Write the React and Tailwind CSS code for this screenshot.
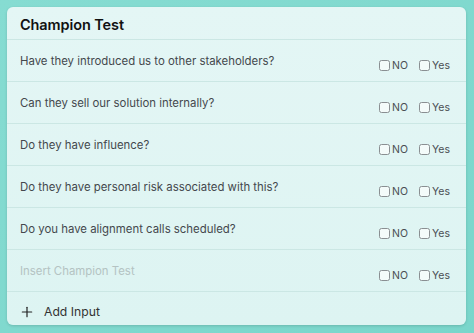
import { Plus } from 'lucide-react';

const questions = [
  'Have they introduced us to other stakeholders?',
  'Can they sell our solution internally?',
  'Do they have influence?',
  'Do they have personal risk associated with this?',
  'Do you have alignment calls scheduled?',
];

function Check({ label }) {
  return (
    <label className="flex items-center gap-[2px]">
      <span className="w-[11px] h-[11px] rounded-[2.5px] border border-[#8a8f92] bg-[#f4fbfa]" />
      <span className="text-[10.5px] text-[#4a4e53]">{label}</span>
    </label>
  );
}

function Row({ text, placeholder }) {
  return (
    <div className="h-[42px] flex items-center justify-between pl-[13px] pr-[16px] border-t border-[#cbe7e4]">
      <span className={`mt-[3px] text-[11.4px] ${placeholder ? 'text-[#b4c3c2]' : 'text-[#44484d]'}`}>
        {text}
      </span>
      <div className="flex items-center gap-[11px] mt-[10px]">
        <Check label="NO" />
        <Check label="Yes" />
      </div>
    </div>
  );
}

export default function App() {
  return (
    <div
      className="w-[474px] h-[333px] bg-gradient-to-br from-[#86dcd2] to-[#7ad6cb] p-[7px] pr-[8px] pb-[8px]"
      style={{ fontFamily: 'Inter, "Noto Sans", sans-serif' }}
    >
      <div className="h-full rounded-[6px] bg-gradient-to-b from-[#e4f6f5] to-[#ddf4f2] shadow-[0_1px_3px_rgba(0,0,0,0.15)] flex flex-col overflow-hidden">
        <div className="h-[32px] flex items-center pl-[13px] pt-[3px]">
          <h2 className="text-[14.5px] font-semibold text-[#111] tracking-[-0.1px]">Champion Test</h2>
        </div>
        {questions.map((q) => (
          <Row key={q} text={q} />
        ))}
        <Row text="Insert Champion Test" placeholder />
        <div className="flex-1 flex items-center gap-[9px] pl-[12px] pt-[7px] border-t border-[#cbe7e4]">
          <Plus size={16} strokeWidth={1.8} className="text-[#222]" />
          <span className="text-[12.2px] text-[#333]">Add Input</span>
        </div>
      </div>
    </div>
  );
}
